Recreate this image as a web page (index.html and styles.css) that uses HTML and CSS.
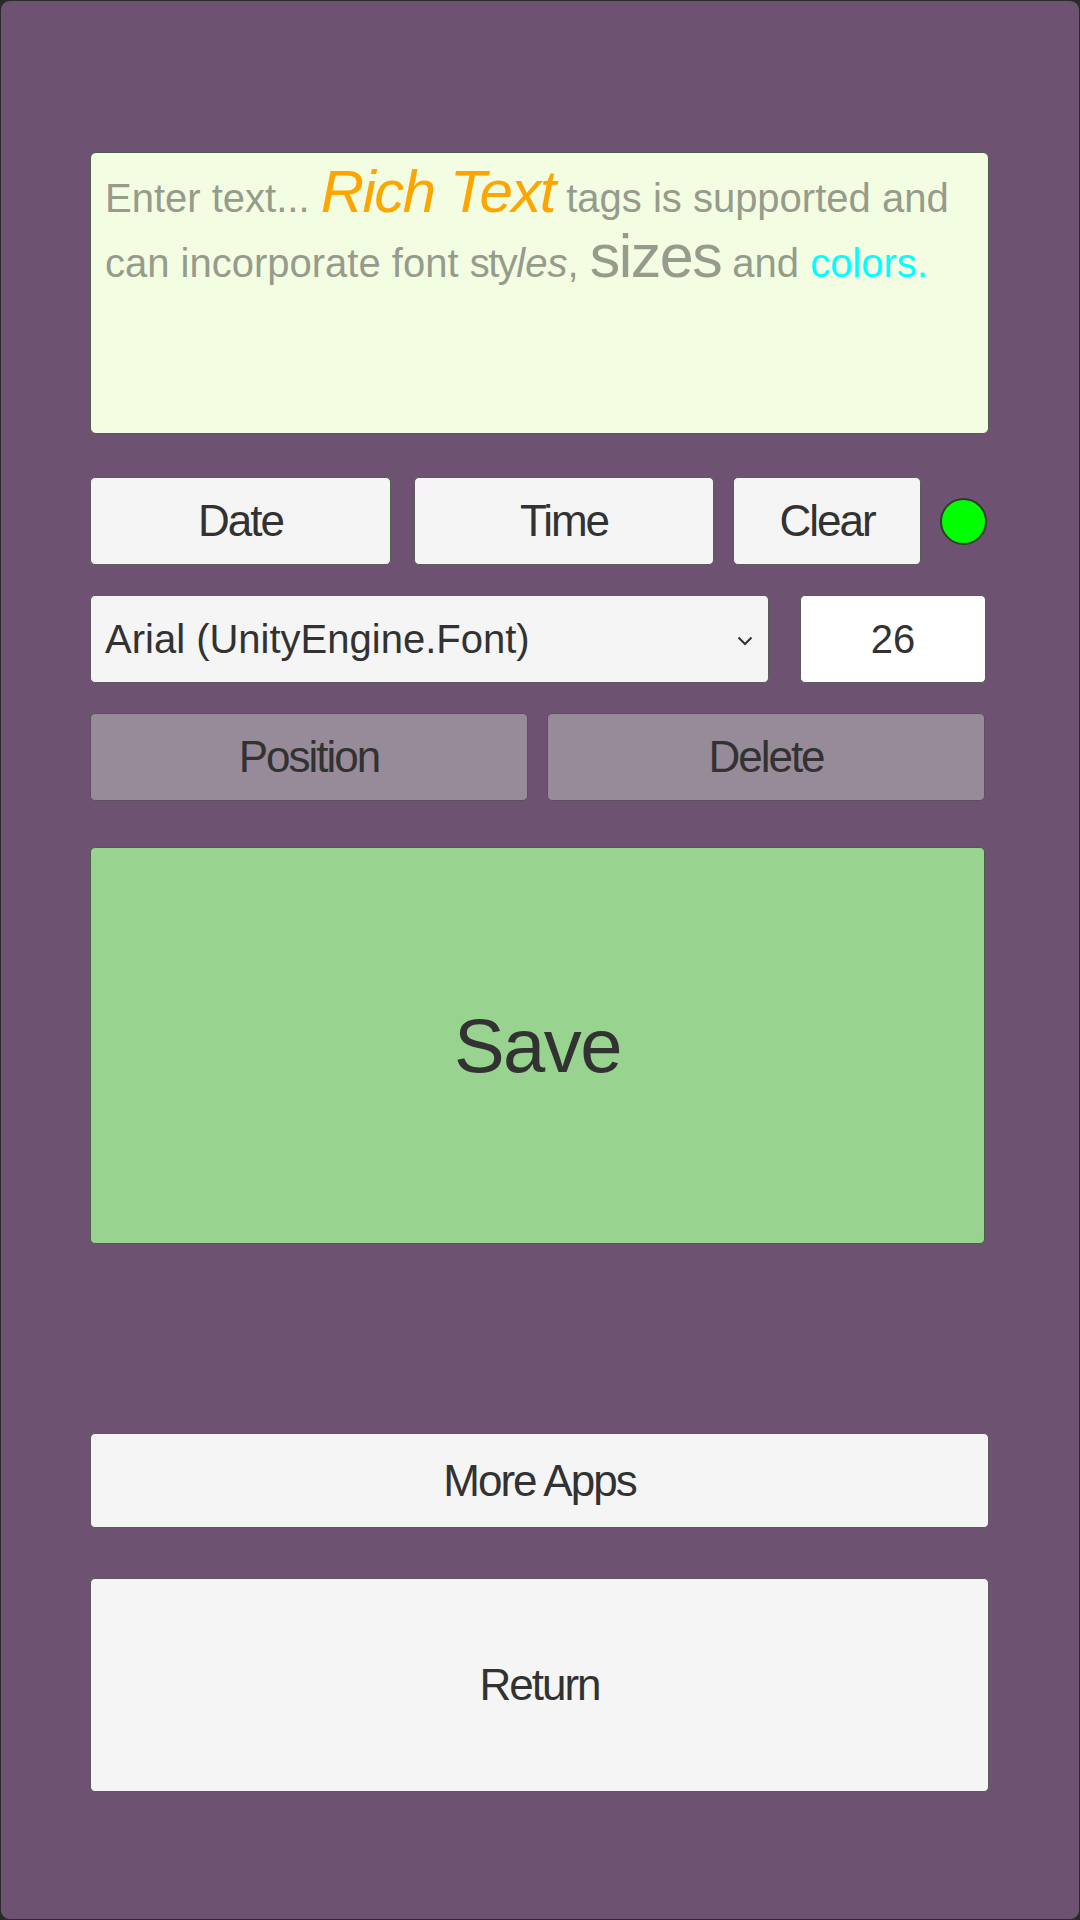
FILE: index.html
```html
<!DOCTYPE html>
<html>
<head>
<meta charset="utf-8">
<link rel="stylesheet" href="styles.css">
</head>
<body>
<div class="screen">
  <div class="textbox">
    <p class="rich">Enter text... <span class="rt">Rich Text</span> tags is supported and<br>can incorporate font <span class="sty">sty</span><i>les</i>, <span class="big">sizes</span> and <span class="cyan">colors.</span></p>
  </div>

  <div class="row row1">
    <div class="btn date">Date</div>
    <div class="btn time">Time</div>
    <div class="btn clear">Clear</div>
    <div class="led"></div>
  </div>

  <div class="row row2">
    <div class="dropdown">
      <span class="dd-label">Arial (UnityEngine.Font)</span>
      <svg class="chev" width="16" height="10" viewBox="0 0 16 10"><polyline points="1.5,1.5 8,8 14.5,1.5" fill="none" stroke="#333" stroke-width="2"/></svg>
    </div>
    <div class="numfield">26</div>
  </div>

  <div class="row row3">
    <div class="btn dim">Position</div>
    <div class="btn dim">Delete</div>
  </div>

  <div class="btn save">Save</div>

  <div class="btn more">More Apps</div>

  <div class="btn ret">Return</div>
</div>
</body>
</html>
```

FILE: styles.css
```css
html, body {
  margin: 0;
  padding: 0;
  background: #2a2a2a;
}

.screen {
  box-sizing: border-box;
  width: 1080px;
  height: 1920px;
  background: #6d5371;
  border: 1px solid #2b2b2b;
  border-radius: 10px;
  padding: 151px 0 0 89px;
  display: flex;
  flex-direction: column;
  font-family: "Liberation Sans", Arial, sans-serif;
  color: #323232;
}

.textbox {
  box-sizing: border-box;
  width: 899px;
  height: 282px;
  background: #f3fde1;
  border: 1px solid #555a4f;
  border-radius: 6px;
  padding: 13px 14px 0 14px;
}

.rich {
  margin: 0;
  font-size: 40px;
  line-height: 65px;
  color: #969b8c;
  white-space: nowrap;
}

.rt {
  font-style: italic;
  font-size: 60px;
  letter-spacing: -1.5px;
  color: #ffa500;
  line-height: 0;
}

.sty {
  letter-spacing: -1.5px;
}

.big {
  font-size: 61px;
  letter-spacing: -1.5px;
  line-height: 0;
}

.cyan {
  color: #00ffff;
}

.row {
  display: flex;
  align-items: center;
}

.btn {
  box-sizing: border-box;
  display: flex;
  align-items: center;
  justify-content: center;
  background: #f5f5f5;
  border: 1px solid #5b5b5b;
  border-radius: 5px;
  font-size: 44px;
  letter-spacing: -2px;
  color: #323232;
}

.row1 {
  margin-top: 43px;
  height: 88px;
}

.row1 .btn {
  height: 88px;
}

.date { width: 301px; }
.time { width: 300px; margin-left: 23px; }
.clear { width: 188px; margin-left: 19px; }

.led {
  box-sizing: border-box;
  width: 47px;
  height: 47px;
  margin-left: 19px;
  border-radius: 50%;
  background: #00ff00;
  border: 2px solid #2f3a2f;
}

.row2 {
  margin-top: 30px;
  height: 88px;
}

.dropdown {
  box-sizing: border-box;
  width: 679px;
  height: 88px;
  background: #f5f5f5;
  border: 1px solid #5b5b5b;
  border-radius: 5px;
  display: flex;
  align-items: center;
  justify-content: space-between;
  padding: 0 15px 0 14px;
  font-size: 40px;
}

.chev {
  display: block;
  margin-top: 4px;
}

.numfield {
  box-sizing: border-box;
  width: 186px;
  height: 88px;
  margin-left: 31px;
  background: #ffffff;
  border: 1px solid #5b5b5b;
  border-radius: 5px;
  display: flex;
  align-items: center;
  justify-content: center;
  font-size: 40px;
}

.row3 {
  margin-top: 30px;
  height: 88px;
}

.dim {
  width: 438px;
  height: 88px;
  background: #978a99;
  border-color: #5e4f60;
}

.dim + .dim {
  margin-left: 19px;
}

.save {
  margin-top: 46px;
  width: 895px;
  height: 397px;
  background: #98d48f;
  border-color: #4c5e49;
  font-size: 76px;
  letter-spacing: -1.5px;
}

.more {
  margin-top: 189px;
  width: 899px;
  height: 95px;
}

.ret {
  margin-top: 50px;
  width: 899px;
  height: 214px;
}
```
